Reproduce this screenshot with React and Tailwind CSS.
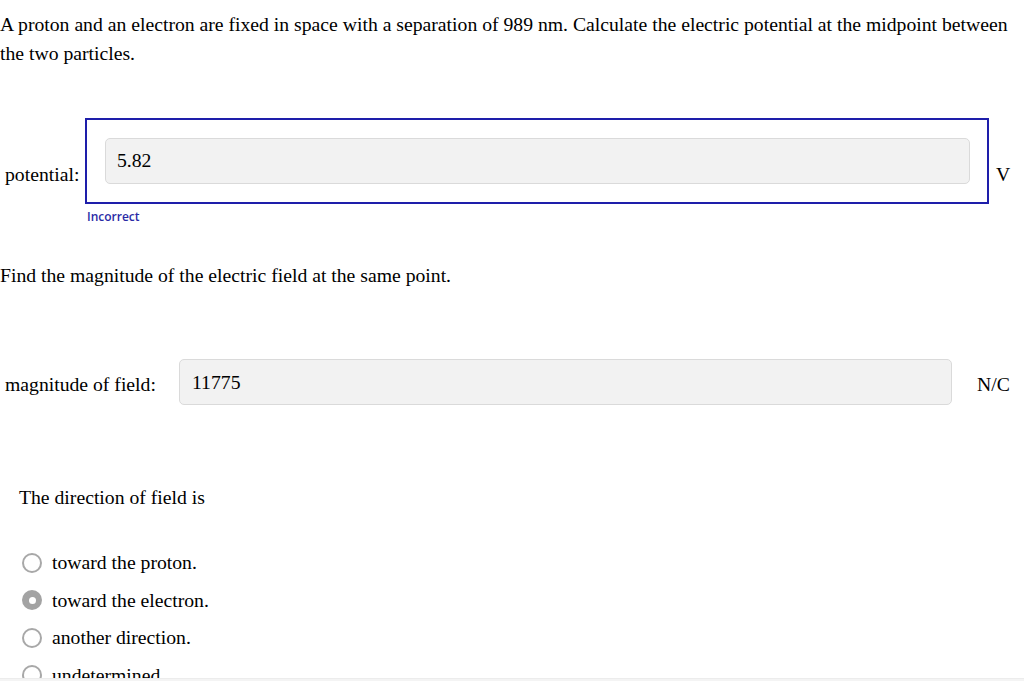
import React from "react";

function Radio({ checked, label }) {
  return (
    <div className="flex items-center h-[37.5px]">
      {checked ? (
        <span className="ml-[22px] w-[20px] h-[20px] rounded-full bg-[#a3a3a3] flex items-center justify-center">
          <span className="w-[7px] h-[7px] rounded-full bg-white" />
        </span>
      ) : (
        <span className="ml-[22px] w-[20px] h-[20px] rounded-full border-2 border-[#a8a8a8] bg-white" />
      )}
      <span className="ml-[10px]">{label}</span>
    </div>
  );
}

export default function App() {
  return (
    <div className="w-[1024px] h-[681px] overflow-hidden bg-[#f4f4f4] text-black text-[19.7px] leading-[29px] font-['Liberation_Serif',serif]">
      <div className="h-[679px] overflow-hidden bg-white border-b border-[#ececec]">
        <p className="pt-[10px]">
          A proton and an electron are fixed in space with a separation of 989 nm. Calculate the electric potential at the midpoint between the two particles.
        </p>

        <div className="mt-[50px] flex items-center">
          <span className="pl-[5px] w-[85px] pt-[26px]">potential:</span>
          <div className="w-[904px] h-[86px] border-2 border-[#1e1eaa] pt-[18px] pl-[18px] pr-[17px]">
            <div className="h-[46px] bg-[#f2f2f2] border border-[#dadada] rounded-[5px] pl-[11px] flex items-center pb-[1px]">
              5.82
            </div>
          </div>
          <span className="ml-[7px] pt-[26px]">V</span>
        </div>
        <div className="ml-[87px] mt-[5px] text-[12px] leading-[16px] font-semibold text-[#2a2aa6] font-['Open_Sans',sans-serif]">
          Incorrect
        </div>

        <p className="mt-[36px]">Find the magnitude of the electric field at the same point.</p>

        <div className="mt-[69px] flex items-center">
          <span className="pl-[5px] w-[179px] pt-[4px]">magnitude of field:</span>
          <div className="w-[773px] h-[46px] bg-[#f2f2f2] border border-[#dadada] rounded-[5px] pl-[12px] flex items-center">
            11775
          </div>
          <span className="ml-[25px] pt-[4px]">N/C</span>
        </div>

        <p className="mt-[78px] pl-[19px]">The direction of field is</p>

        <div className="mt-[32px]">
          <Radio label="toward the proton." />
          <Radio checked label="toward the electron." />
          <Radio label="another direction." />
          <Radio label="undetermined." />
        </div>
      </div>
    </div>
  );
}
